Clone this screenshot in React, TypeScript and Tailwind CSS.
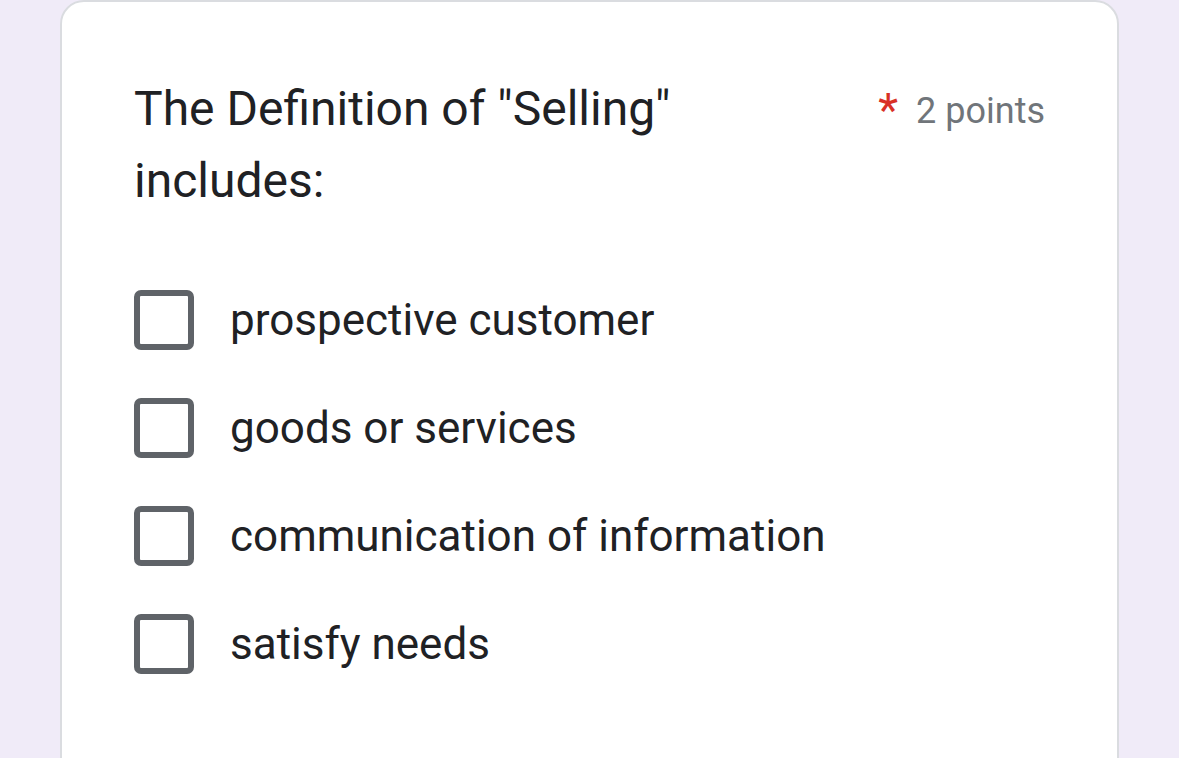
export default function App() {
  const options = [
    'prospective customer',
    'goods or services',
    'communication of information',
    'satisfy needs',
  ]

  return (
    <div
      className="h-[758px] w-[1179px] overflow-hidden bg-[#f0ebf8] pl-[60px] pr-[60px]"
      style={{ fontFamily: 'Roboto, "Noto Sans", sans-serif' }}
    >
      <div className="h-[790px] rounded-[24px] border-2 border-[#dadce0] bg-white pl-[72px] pr-[72px] pt-[71px]">
        <div className="flex items-start justify-between">
          <h2 className="w-[600px] text-[48px] leading-[72px] text-[#202124]">
            The Definition of "Selling" includes:
          </h2>
          <div className="flex items-start pt-[14px]">
            <span className="mr-[18px] text-[46px] leading-[46px] text-[#d93025]">*</span>
            <span className="text-[36px] leading-[48px] text-[#70757a]">2 points</span>
          </div>
        </div>

        <div className="mt-[73px] flex flex-col gap-[48px]">
          {options.map((opt) => (
            <label key={opt} className="flex h-[60px] items-center">
              <span className="h-[60px] w-[60px] shrink-0 rounded-[7px] border-[6px] border-[#5f6368]" />
              <span className="ml-[36px] text-[44px] leading-[60px] text-[#202124]">{opt}</span>
            </label>
          ))}
        </div>
      </div>
    </div>
  )
}
